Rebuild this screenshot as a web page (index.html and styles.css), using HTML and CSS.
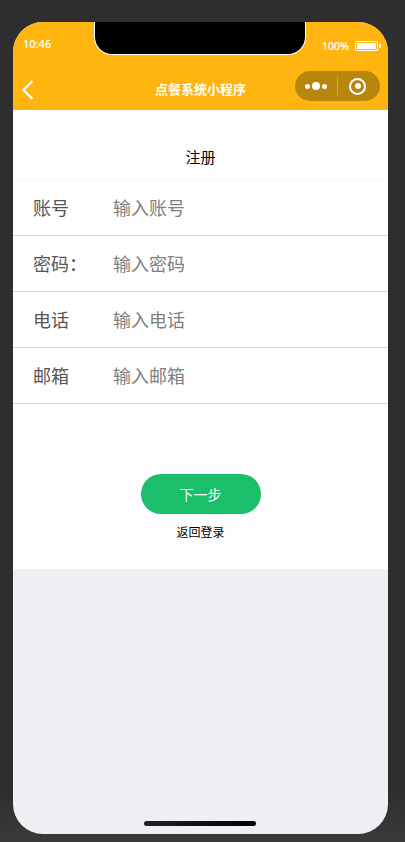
FILE: index.html
```html
<!DOCTYPE html>
<html lang="zh-CN">
<head>
  <meta charset="UTF-8">
  <meta name="viewport" content="width=device-width, initial-scale=1.0">
  <title>点餐系统小程序</title>
  <link rel="stylesheet" href="styles.css">
</head>
<body>

  <div class="phone">
    <div class="notch"></div>

    <header class="top">
      <div class="status">
        <span class="time">10:46</span>
        <div class="battery-wrap">
          <span class="percent">100%</span>
          <span class="battery"><span class="battery-fill"></span></span>
          <span class="battery-tip"></span>
        </div>
      </div>
      <div class="nav">
        <svg class="back" width="14" height="22" viewBox="0 0 14 22">
          <path d="M11.5 2 L2.5 11 L11.5 20" fill="none" stroke="#fff" stroke-width="2.2"/>
        </svg>
        <span class="nav-title">点餐系统小程序</span>
        <div class="capsule">
          <div class="dots">
            <span class="dot"></span>
            <span class="dot dot-big"></span>
            <span class="dot"></span>
          </div>
          <span class="capsule-line"></span>
          <span class="target"><span class="target-in"></span></span>
        </div>
      </div>
    </header>

    <main class="content">
      <h1 class="title">注册</h1>
      <div class="form">
        <div class="row">
          <span class="label">账号</span>
          <span class="holder">输入账号</span>
        </div>
        <div class="row">
          <span class="label">密码：</span>
          <span class="holder">输入密码</span>
        </div>
        <div class="row">
          <span class="label">电话</span>
          <span class="holder">输入电话</span>
        </div>
        <div class="row">
          <span class="label">邮箱</span>
          <span class="holder">输入邮箱</span>
        </div>
      </div>
      <button class="btn-next">下一步</button>
      <a class="back-login">返回登录</a>
    </main>

    <div class="home-bar"></div>
  </div>

</body>
</html>
```
FILE: styles.css
```css
* { box-sizing: border-box; margin: 0; padding: 0; font-family: "Liberation Sans", "Noto Sans CJK SC", sans-serif; }
html, body { height: 100%; overflow: hidden; }
body { background: linear-gradient(#2e2e2e 790px, #3a3a3a 842px); padding-top: 22px; }

.phone { position: relative; width: 375px; height: 812px; margin-left: 13px; background: #efeff4; border-radius: 30px; overflow: hidden; }
.notch { position: absolute; top: 0; left: 81px; width: 212px; height: 33px; background: #000; border: 1px solid #fff; border-top: none; border-radius: 0 0 18px 18px; }

.top { height: 88px; background: #ffb40f; color: #fff; }
.status { display: flex; justify-content: space-between; align-items: center; height: 44px; padding: 0 7px 0 10px; }
.time { font-size: 11px; font-weight: 600; margin-top: -1px; font-family: "Open Sans", sans-serif; }
.battery-wrap { display: flex; align-items: center; margin-top: 4px; }
.percent { font-size: 10.5px; font-weight: 600; margin-right: 6px; font-family: "Open Sans", sans-serif; }
.battery { display: block; width: 23px; height: 10px; border: 1px solid #fff; padding: 1px; border-radius: 1px; }
.battery-fill { display: block; height: 100%; background: #fff; }
.battery-tip { display: block; width: 2px; height: 4px; margin-left: 1px; background: #fff; }

.nav { position: relative; display: flex; justify-content: space-between; align-items: center; height: 44px; padding: 0 8px; }
.back { display: block; margin-top: 4px; }
.nav-title { position: absolute; left: 0; right: 0; text-align: center; font-size: 13px; font-weight: bold; }
.capsule { display: flex; align-items: center; width: 85px; height: 30px; margin-top: -4px; background: #b8860d; border-radius: 15px; padding-left: 10px; }
.dots { display: flex; align-items: center; gap: 2px; }
.dot { display: block; width: 5px; height: 5px; border-radius: 50%; background: #fff; }
.dot-big { width: 8px; height: 8px; }
.capsule-line { display: block; width: 1px; height: 18px; margin-left: 10px; background: rgba(255, 255, 255, 0.3); }
.target { display: flex; justify-content: center; align-items: center; width: 17px; height: 17px; margin-left: 11px; border: 2px solid #fff; border-radius: 50%; }
.target-in { display: block; width: 6px; height: 6px; border-radius: 50%; background: #fff; }

.content { display: flex; flex-direction: column; align-items: center; height: 459px; background: #fff; }
.title { width: 100%; height: 70px; padding-top: 38px; text-align: center; font-size: 15px; line-height: 20px; font-weight: normal; color: #000; border-bottom: 1px solid #f5f5f5; }
.form { width: 100%; }
.row { display: flex; align-items: center; height: 56px; border-bottom: 1px solid #d9d9d9; padding-left: 20px; padding-bottom: 2px; font-size: 18px; }
.label { width: 80px; color: #555; }
.holder { color: #808080; }
.btn-next { width: 120px; height: 40px; margin-top: 70px; background: #1bbf6b; color: #fff; border: none; border-radius: 20px; font-size: 14px; }
.back-login { margin-top: 11px; font-size: 12px; line-height: 17px; color: #000; }

.home-bar { position: absolute; left: 131px; bottom: 8px; width: 112px; height: 5px; background: linear-gradient(90deg, #222, #000); border-radius: 3px; }
```
